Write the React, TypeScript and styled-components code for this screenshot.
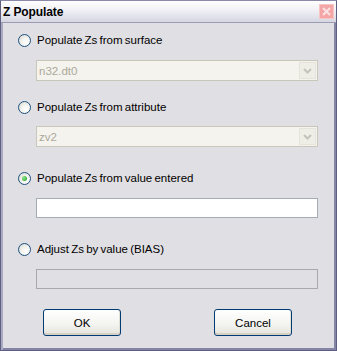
import React, { useState } from "react";
import styled, { createGlobalStyle } from "styled-components";

const GlobalStyle = createGlobalStyle`
  html, body {
    margin: 0;
    padding: 0;
    background: #e0dfe3;
  }
  body {
    font-family: "Liberation Sans", Arial, sans-serif;
  }
`;

const Window = styled.div`
  width: 337px;
  height: 351px;
  box-sizing: border-box;
  display: flex;
  flex-direction: column;
  background: #e0dfe3;
  border: 1px solid #5e5e80;
  border-top-color: #8a8aa8;
  box-shadow: inset 2px 0 0 #a9a9c2, inset -2px 0 0 #8484a4, inset 0 -2px 0 #8484a4;
`;

const TitleBar = styled.div`
  height: 21px;
  flex: 0 0 21px;
  display: flex;
  align-items: center;
  justify-content: space-between;
  padding: 0 2px 0 2px;
  background: linear-gradient(to bottom, #ffffff 0%, #f4f4f8 35%, #d6d6e2 100%);
  border-bottom: 1px solid #9c9cb4;
`;

const Title = styled.span`
  font-weight: bold;
  font-size: 12px;
  color: #000;
  letter-spacing: -0.1px;
`;

const CloseButton = styled.div`
  width: 13px;
  height: 13px;
  margin-right: 0;
  background: #f4a6a6;
  border: 1px solid #f8c4c4;
  display: flex;
  align-items: center;
  justify-content: center;
`;

const Body = styled.div`
  flex: 1;
  display: flex;
  flex-direction: column;
  padding: 9px 18px 0 17px;
`;

const Section = styled.div<{ $gap: number }>`
  display: flex;
  flex-direction: column;
  margin-top: ${({ $gap }) => $gap}px;
`;

const RadioRow = styled.label`
  display: flex;
  align-items: center;
  gap: 6px;
  height: 16px;
  font-size: 11.5px;
  color: #000;
  cursor: default;
  word-spacing: -1px;
`;

const RadioCircle = styled.span<{ $checked: boolean }>`
  width: 11px;
  height: 11px;
  border-radius: 50%;
  border: 1px solid #1c5180;
  background: radial-gradient(circle at 65% 65%, #ffffff 0%, #f2f2ee 45%, #d4d4cc 100%);
  display: flex;
  align-items: center;
  justify-content: center;
  flex: 0 0 auto;

  &::after {
    content: "";
    display: ${({ $checked }) => ($checked ? "block" : "none")};
    width: 5px;
    height: 5px;
    border-radius: 50%;
    background: radial-gradient(circle at 35% 35%, #8ee28e, #21a121);
  }
`;

const FieldWrap = styled.div`
  margin: 12px 0 0 18px;
`;

const Select = styled.div`
  height: 21px;
  box-sizing: border-box;
  display: flex;
  align-items: stretch;
  border: 1px solid #c9c7ba;
  background: #f4f3ee;
`;

const SelectValue = styled.div`
  flex: 1;
  display: flex;
  align-items: center;
  padding-left: 2px;
  font-size: 11.5px;
  color: #aca899;
`;

const SelectArrow = styled.div`
  width: 17px;
  margin: 1px;
  box-sizing: border-box;
  border: 1px solid #e4e3dc;
  background: #eeede6;
  display: flex;
  align-items: center;
  justify-content: center;
`;

const TextBox = styled.input<{ $disabled?: boolean }>`
  display: block;
  width: 100%;
  height: 20px;
  box-sizing: border-box;
  margin: 0;
  border: 1px solid ${({ $disabled }) => ($disabled ? "#a9a9a9" : "#a5acb5")};
  background: ${({ $disabled }) => ($disabled ? "#e0dfe3" : "#ffffff")};
  font-family: inherit;
  font-size: 11.5px;
  outline: none;
`;

const ButtonRow = styled.div`
  display: flex;
  justify-content: space-between;
  padding: 0 26px 0 25px;
  margin-top: 20px;
`;

const Button = styled.button`
  width: 78px;
  height: 27px;
  box-sizing: border-box;
  border: 1px solid #003c74;
  border-radius: 3px;
  background: linear-gradient(to bottom, #ffffff 0%, #f3f3ef 60%, #e4e3dc 100%);
  box-shadow: inset 0 -2px 0 #d6d0c5, inset -1px 0 0 #e3e0d8;
  font-family: "Liberation Sans", Arial, sans-serif;
  font-size: 11.5px;
  color: #000;
  padding: 0;
`;

const Chevron = () => (
  <svg width="9" height="6" viewBox="0 0 9 6">
    <path d="M1 1 L4.5 4.5 L8 1" fill="none" stroke="#c3c3bd" strokeWidth="2" />
  </svg>
);

const CloseX = () => (
  <svg width="9" height="9" viewBox="0 0 9 9">
    <path d="M1 1 L8 8 M8 1 L1 8" stroke="#fbe3e3" strokeWidth="2" />
  </svg>
);

type Option = "surface" | "attribute" | "value" | "bias";

const Radio: React.FC<{
  checked: boolean;
  label: string;
  onSelect: () => void;
}> = ({ checked, label, onSelect }) => (
  <RadioRow onClick={onSelect}>
    <RadioCircle $checked={checked} />
    <span>{label}</span>
  </RadioRow>
);

const DisabledSelect: React.FC<{ value: string }> = ({ value }) => (
  <Select>
    <SelectValue>{value}</SelectValue>
    <SelectArrow>
      <Chevron />
    </SelectArrow>
  </Select>
);

export default function App() {
  const [choice, setChoice] = useState<Option>("value");
  const [value, setValue] = useState("");

  return (
    <>
      <GlobalStyle />
      <Window>
        <TitleBar>
          <Title>Z Populate</Title>
          <CloseButton>
            <CloseX />
          </CloseButton>
        </TitleBar>
        <Body>
          <Section $gap={0}>
            <Radio
              checked={choice === "surface"}
              label="Populate Zs from surface"
              onSelect={() => setChoice("surface")}
            />
            <FieldWrap>
              <DisabledSelect value="n32.dt0" />
            </FieldWrap>
          </Section>
          <Section $gap={18}>
            <Radio
              checked={choice === "attribute"}
              label="Populate Zs from attribute"
              onSelect={() => setChoice("attribute")}
            />
            <FieldWrap style={{ marginTop: 11 }}>
              <DisabledSelect value="zv2" />
            </FieldWrap>
          </Section>
          <Section $gap={23}>
            <Radio
              checked={choice === "value"}
              label="Populate Zs from value entered"
              onSelect={() => setChoice("value")}
            />
            <FieldWrap>
              <TextBox value={value} onChange={(e) => setValue(e.target.value)} />
            </FieldWrap>
          </Section>
          <Section $gap={23}>
            <Radio
              checked={choice === "bias"}
              label="Adjust Zs by value (BIAS)"
              onSelect={() => setChoice("bias")}
            />
            <FieldWrap>
              <TextBox $disabled disabled value="" readOnly />
            </FieldWrap>
          </Section>
          <ButtonRow>
            <Button>OK</Button>
            <Button>Cancel</Button>
          </ButtonRow>
        </Body>
      </Window>
    </>
  );
}
